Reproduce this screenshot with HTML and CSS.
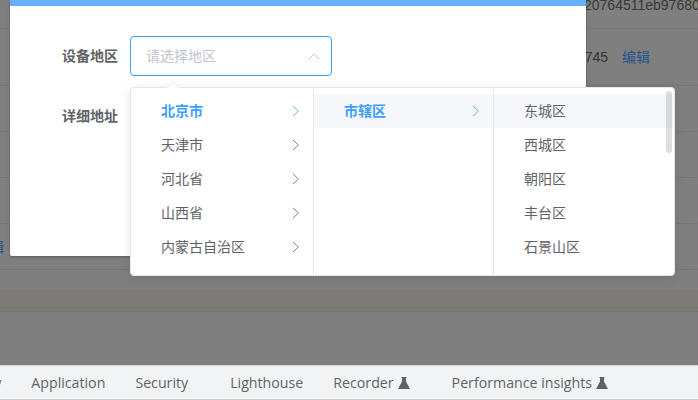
FILE: index.html
```html
<!DOCTYPE html>
<html lang="zh">
<head>
<meta charset="utf-8">
<title>设备地区</title>
<link rel="stylesheet" href="styles.css">
</head>
<body>
<svg class="defs" width="0" height="0" aria-hidden="true">
  <symbol id="chev" viewBox="0 0 7 12"><path d="M1 .9 6.400 6 1 11.100" fill="none" stroke="currentColor" stroke-width="1"/></symbol>
  <symbol id="flask" viewBox="0 0 12 12"><path d="M3.500 0h5v1H8v3.600L12 12H0l4-7.400V1h-.5z" fill="currentColor"/></symbol>
</svg>
<div class="app">
  <main class="page">
    <div class="row row-a"><span class="cell cut-top">20764511eb97680</span></div>
    <div class="row row-b"><span class="cell">745</span><a class="link">编辑</a></div>
    <div class="row row-c"></div>
    <div class="row row-c"></div>
    <div class="row row-c"></div>
    <div class="row row-c row-left"><a class="link link-left">编辑</a></div>
    <div class="gap"></div>
    <div class="band"></div>
  </main>

  <section class="dialog">
    <div class="dialog-head"></div>
    <form class="form">
      <div class="field field-first">
        <label class="label">设备地区</label>
        <div class="select">
          <span class="placeholder">请选择地区</span>
          <svg class="caret" width="12" height="7" viewBox="0 0 12 7"><path d="M.8 6.200 6 1l5.200 5.200" fill="none" stroke="currentColor" stroke-width="1"/></svg>
        </div>
      </div>
      <div class="field">
        <label class="label">详细地址</label>
      </div>
    </form>
  </section>

  <div class="cascader">
    <ul class="col col-1">
      <li class="item active"><span class="text">北京市</span><svg class="chev"><use href="#chev"/></svg></li>
      <li class="item"><span class="text">天津市</span><svg class="chev"><use href="#chev"/></svg></li>
      <li class="item"><span class="text">河北省</span><svg class="chev"><use href="#chev"/></svg></li>
      <li class="item"><span class="text">山西省</span><svg class="chev"><use href="#chev"/></svg></li>
      <li class="item"><span class="text">内蒙古自治区</span><svg class="chev"><use href="#chev"/></svg></li>
    </ul>
    <ul class="col col-2">
      <li class="item active hover"><span class="text">市辖区</span><svg class="chev"><use href="#chev"/></svg></li>
    </ul>
    <ul class="col col-3">
      <li class="item hover"><span class="text">东城区</span></li>
      <li class="item"><span class="text">西城区</span></li>
      <li class="item"><span class="text">朝阳区</span></li>
      <li class="item"><span class="text">丰台区</span></li>
      <li class="item"><span class="text">石景山区</span></li>
    </ul>
    <div class="thumb"></div>
  </div>

  <nav class="tabs">
    <span class="tab tab-clipped">Memory</span>
    <span class="tab">Application</span>
    <span class="tab">Security</span>
    <span class="tab tab-wide">Lighthouse</span>
    <span class="tab">Recorder<svg class="flask"><use href="#flask"/></svg></span>
    <span class="tab tab-wide">Performance insights<svg class="flask"><use href="#flask"/></svg></span>
  </nav>
</div>
</body>
</html>
```
FILE: styles.css
```css
* { box-sizing: border-box; }
html, body { margin: 0; padding: 0; }
body {
  font-family: "Liberation Sans", "Noto Sans CJK SC", sans-serif;
  font-size: 14px;
  color: #606266;
  background: #808080;
}
.defs { position: absolute; }
.app {
  position: relative;
  width: 698px;
  height: 400px;
  overflow: hidden;
  display: flex;
  flex-direction: column;
}
.page {
  flex: 1;
  min-height: 0;
  display: flex;
  flex-direction: column;
  background: #7f7f7f;
}
.row {
  display: flex;
  align-items: center;
  justify-content: flex-end;
  border-bottom: 1px solid #767676;
  overflow: hidden;
  flex: none;
  color: #333;
}
.row-a { height: 29px; align-items: flex-start; }
.row-b { height: 57px; padding-right: 48px; }
.row-c { height: 46px; }
.row-left { justify-content: flex-start; }
.cell { white-space: nowrap; }
.cut-top { width: 114px; margin-top: -4px; line-height: 18px; color: #3a3a3a; }
.link {
  margin-left: 14px;
  padding-bottom: 2px;
  color: #25558f;
  font-family: "Noto Sans CJK SC", sans-serif;
}
.link-left { margin-left: -24px; }
.gap { height: 20px; flex: none; }
.band {
  height: 22px;
  flex: none;
  background: #7b7a75;
  border-bottom: 1px solid #777671;
}
.dialog {
  position: absolute;
  left: 10px;
  top: 0;
  width: 576px;
  height: 256px;
  background: #fff;
  border-radius: 0 0 2px 2px;
  box-shadow: 0 1px 3px rgba(0, 0, 0, .3);
}
.dialog-head { height: 6px; background: #66b1ff; }
.form { padding: 30px 0 0 52px; display: flex; flex-direction: column; gap: 20px; }
.field { display: flex; align-items: center; height: 40px; }
.label {
  width: 68px;
  flex: none;
  padding-bottom: 2px;
  font-family: "Noto Sans CJK SC", sans-serif;
  font-weight: 700;
  color: #606266;
}
.select {
  width: 202px;
  height: 40px;
  border: 1px solid #409eff;
  border-radius: 4px;
  padding: 0 11px 0 15px;
  display: flex;
  align-items: center;
  justify-content: space-between;
  font-family: "Noto Sans CJK SC", sans-serif;
}
.placeholder { color: #c0c4cc; padding-bottom: 2px; }
.caret { color: #c0c4cc; }
.cascader {
  position: absolute;
  left: 130px;
  top: 87px;
  width: 545px;
  height: 189px;
  display: flex;
  background: #fff;
  border: 1px solid #e4e7ed;
  border-radius: 4px;
  box-shadow: 0 2px 12px rgba(0, 0, 0, .1);
  font-family: "Noto Sans CJK SC", sans-serif;
}
.cascader::before {
  content: "";
  position: absolute;
  left: 37px;
  top: -5px;
  width: 9px;
  height: 9px;
  background: #fff;
  border-left: 1px solid #ebeef5;
  border-top: 1px solid #ebeef5;
  transform: rotate(45deg);
}
.col {
  list-style: none;
  margin: 0;
  padding: 6px 0;
  border-right: 1px solid #e4e7ed;
  position: relative;
}
.col-1 { width: 183px; }
.col-2 { width: 180px; }
.col-3 { flex: 1; border-right: 0; }
.item {
  height: 34px;
  padding: 0 14px 0 30px;
  display: flex;
  align-items: center;
  justify-content: space-between;
  color: #606266;
}
.text { padding-bottom: 2px; }
.item.hover { background: #f5f7fa; }
.item.active { color: #409eff; font-weight: 700; }
.chev { width: 7px; height: 12px; color: #7d7f84; flex: none; }
.active .chev { color: #66b1ff; }
.thumb {
  position: absolute;
  right: 2px;
  top: 3px;
  width: 6px;
  height: 62px;
  border-radius: 3px;
  background: rgba(144, 147, 153, .3);
}
.tabs {
  flex: none;
  height: 35px;
  display: flex;
  align-items: center;
  gap: 30px;
  background: #f1f3f4;
  border-top: 1px solid #d5d6d8;
  border-bottom: 1px solid #cdcfd1;
  font-family: "Open Sans", sans-serif;
  font-size: 14.2px;
  color: #5f6368;
  white-space: nowrap;
}
.tab { display: flex; align-items: center; gap: 4px; }
.tab-clipped { margin-left: -54px; }
.tab-wide { margin-left: 12px; }
.flask { width: 12px; height: 12px; color: #5f6368; }
```
